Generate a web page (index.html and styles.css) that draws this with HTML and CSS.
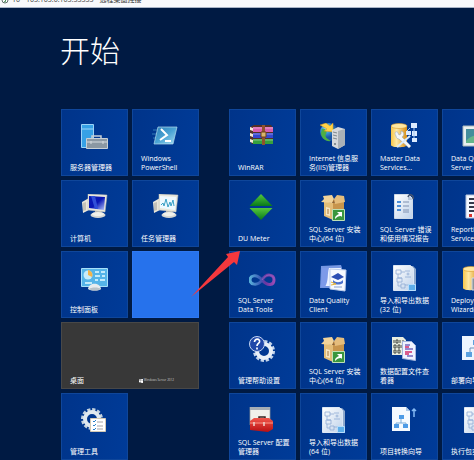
FILE: index.html
```html
<!DOCTYPE html>
<html lang="zh-CN">
<head>
<meta charset="utf-8">
<title>开始</title>
<meta name="viewport" content="width=device-width, initial-scale=1">
<link rel="stylesheet" href="styles.css">
</head>
<body>
<svg class="defs" aria-hidden="true">
  <defs>
    <linearGradient id="paper" x2="1" y2="1"><stop stop-color="#fff"/><stop offset="1" stop-color="#bfd2ea"/></linearGradient>
    <linearGradient id="gold"><stop stop-color="#f7c64a"/><stop offset=".35" stop-color="#ffe9a5"/><stop offset="1" stop-color="#d68b12"/></linearGradient>
    <linearGradient id="screen" x2="1" y2="1"><stop stop-color="#0a1eb4"/><stop offset=".5" stop-color="#0815b4"/><stop offset="1" stop-color="#b5c8ff"/></linearGradient>
    <linearGradient id="shell" x2="1" y2="1"><stop stop-color="#2d7fb8"/><stop offset=".5" stop-color="#4aa3d4"/><stop offset="1" stop-color="#a5dcf0"/></linearGradient>
    <linearGradient id="green" x2="0" y2="1"><stop stop-color="#54c83c"/><stop offset="1" stop-color="#087a1a"/></linearGradient>
    <linearGradient id="loop"><stop stop-color="#58aed8"/><stop offset=".4" stop-color="#3c5fb8"/><stop offset=".65" stop-color="#6b35a0"/><stop offset="1" stop-color="#9a4bb5"/></linearGradient>
    <linearGradient id="red" x2="0" y2="1"><stop stop-color="#f0564a"/><stop offset="1" stop-color="#b80f12"/></linearGradient>
    <radialGradient id="globe" cx=".35" cy=".3"><stop stop-color="#b8ecff"/><stop offset=".5" stop-color="#3c9bdc"/><stop offset="1" stop-color="#1a58a8"/></radialGradient>
    <symbol id="box" viewBox="0 0 27 27">
      <path d="M4 7l9 2v17l-9-4z" fill="#e3bd78"/><path d="M13 9l11-2v15l-11 4z" fill="#c8954c"/>
      <path d="M4 7l6-3 4 2-1 3z" fill="#8a5a24"/><path d="M13 6l6-3 5 4-11 2z" fill="#9c6a30"/>
      <path d="M4 5L3 2l9-1 2 4-2 4-11-1z" fill="#f1d39a"/><path d="M14 5l3-4 7 1 1 6-10 2z" fill="#e5bd7c"/>
      <path d="M6 13l4 1v8l-4-1z" fill="#f6e5c2"/><path d="M8 15v5" stroke="#a6783c"/>
      <path d="M12.500 15.500h12v11h-12z" fill="#3a963e" stroke="#bfe0b6"/><path d="M15 24c0-2 2-3 4-4l-2-2h5v5l-1-1c-3 0-4 1-6 3z" fill="#fff"/>
    </symbol>
    <symbol id="flow" viewBox="0 0 27 27">
      <path d="M5 1h17l3 3v22H5z" fill="#8fa9cc"/><path d="M2.500.5h17l3 3v22h-20z" fill="url(#paper)" stroke="#dce7f5"/>
      <g fill="none" stroke="#8fabd4" stroke-width=".8"><path d="M5 5h5v4H5zM14 6h5M10 7h4M7 9v4h4M6 13h5v4H6zM14 12h6M7 17v4h3M10 19h4v4h-4zM14 20h4"/><circle cx="17" cy="9" r="1"/></g>
      <path d="M17.500 19.500h7v6h-7z" fill="#5eaeea" stroke="#b7dcfa"/>
    </symbol>
    <symbol id="cylinder" viewBox="0 0 27 27">
      <path d="M1 4v19c0 3 16 3 16 0V4z" fill="url(#gold)"/><ellipse cx="9" cy="4" rx="8" ry="2.500" fill="#ffe7a0" stroke="#d99b2c" stroke-width=".6"/>
    </symbol>
    <symbol id="pc" viewBox="0 0 27 27">
      <path d="M1 8l7-4v12l-6 3z" fill="#e9e6da"/><path d="M2 9l3-1v8l-3 1z" fill="#c3c1b8"/>
      <ellipse cx="17" cy="21" rx="7.500" ry="3" fill="#d6d7d2"/><path d="M14 15h6l1 5h-7z" fill="#b3b6b5"/><ellipse cx="17" cy="20" rx="6" ry="2" fill="#f1f1eb"/>
      <path d="M7 0l19 1-2 17-17-2z" fill="#e9e7dc" stroke="#bfc1b9" stroke-width=".5"/>
    </symbol>
  </defs>
</svg>

<header class="topbar">
  <svg class="topbar-icon" viewBox="0 0 8 8" aria-hidden="true"><circle cx="4" cy="4" r="3" fill="#fff" stroke="#61706a"/><path d="M3 3l2 2-2 1" fill="none" stroke="#49915b"/></svg>
  <span>10</span><span class="host">103.103.0.103:33333</span><span>远程桌面连接</span>
</header>

<main class="start">
  <h1>开始</h1>
  <div class="groups">
    <section class="group group-system" aria-label="系统">
      <a class="tile" href="#"><svg viewBox="0 0 27 27" aria-hidden="true"><path d="M.5 1.500h12v23H.5z" fill="#36a1e6" stroke="#9bd3f7"/><path d="M1 6h11" stroke="#9bd3f7"/><path d="M11 15v-2h9v2" fill="none" stroke="#c8d0d6" stroke-width="1.500"/><path d="M5.500 15.500h21v10h-21z" fill="#8b98a3" stroke="#c8d0d6"/><path d="M6 19h20M10 18v3M22 18v3" stroke="#d6dce0"/></svg><span>服务器管理器</span></a>
      <a class="tile" href="#"><svg viewBox="0 0 27 27" aria-hidden="true"><path d="M1 7h5M0 11h5M1 15h3" stroke="#337db8"/><path d="M6 4h19l-4 17H2z" fill="url(#shell)" stroke="#b5dcee" stroke-width=".7"/><path d="M9 6l6 6-7 5M13 18h6" fill="none" stroke="#fff" stroke-width="2"/></svg><span>Windows<br>PowerShell</span></a>
      <a class="tile" href="#"><svg viewBox="0 0 27 27" aria-hidden="true"><use href="#pc"/><path d="M8 2l16 1-1 13-15-2z" fill="url(#screen)"/><path d="M10 2l4 0 3 13-3 0z" fill="#304fd8"/></svg><span>计算机</span></a>
      <a class="tile" href="#"><svg viewBox="0 0 27 27" aria-hidden="true"><use href="#pc"/><path d="M8 2l16 1-1 13-15-2z" fill="#eff9ff"/><path d="M9 11l2-2 1 3 2-7 2 8 2-5 1 4 2-6 1 6" fill="none" stroke="#3aa0c6"/></svg><span>任务管理器</span></a>
      <a class="tile" href="#"><svg viewBox="0 0 27 27" aria-hidden="true"><path d="M.5 3.500h26v18H.5z" fill="#55b4e8" stroke="#a8dff8"/><circle cx="7" cy="10" r="4.500" fill="#c7ecfb"/><path d="M7 10V5a5 5 0 0 1 4 7z" fill="#f2b44c"/><path d="M14 7h4M20 7h4M14 11h5M21 11h3M14 15h3M19 15h5M4 18h7" stroke="#e8fbff" stroke-width="1.500"/><path d="M7 24c1-7 12-7 13 0-3 2-10 2-13 0z" fill="#e8ecee"/><path d="M8 24c2-2 10-2 12 0-3 2-9 2-12 0z" fill="#b8c2c8"/></svg><span>控制面板</span></a>
      <a class="tile tile-active" href="#" aria-label="磁贴"></a>
      <a class="tile tile-wide" href="#"><span>桌面</span><small><svg class="brand" viewBox="0 0 4 4" aria-hidden="true"><path d="M0 .6L1.800.3v1.500H0zM2 .3L4 0v1.800H2zM0 2h1.800v1.500L0 3.300zM2 2h2v2l-2-.3z" fill="#fff"/></svg>Windows Server 2012</small></a>
      <a class="tile" href="#"><svg viewBox="0 0 27 27" aria-hidden="true"><circle cx="11" cy="12" r="9" fill="none" stroke="#c3d2df" stroke-width="4" stroke-dasharray="3 1.700"/><circle cx="11" cy="12" r="7" fill="none" stroke="#dfe8ef" stroke-width="4"/><path d="M9.500 11.500h15v13h-15z" fill="#fff" stroke="#d3c9b5"/><path d="M12 14l1 1 2-2M12 18l1 1 2-2M12 22l1 1 2-2" fill="none" stroke="#2a80c8"/><path d="M16 15h6M16 19h6M16 22h6" stroke="#a6a3a5"/></svg><span>管理工具</span></a>
    </section>

    <section class="group group-apps" aria-label="应用">
      <a class="tile" href="#"><svg viewBox="0 0 27 27" aria-hidden="true"><path d="M1 4l4-2h17l2 3v16H3l-2-3z" fill="#543125"/><path d="M4 4h20v5H4z" fill="#d85eae"/><path d="M4 10h20v5H4z" fill="#3547cf"/><path d="M4 16h20v5H4z" fill="#37a13c"/><path d="M1 4l3 1v3L1 7zM1 10l3 1v3l-3-1zM1 16l3 1v3l-3-1z" fill="#f3ead7"/><path d="M4 5h20M4 11h20M4 17h20" stroke="#fff" stroke-opacity=".4"/><path d="M13 2h3v20h-3z" fill="#91532d"/><path d="M12 9h5v5h-5z" fill="#d9b56b" stroke="#6c3d1c"/></svg><span>WinRAR</span></a>
      <a class="tile" href="#"><svg viewBox="0 0 27 27" aria-hidden="true"><circle cx="9" cy="9" r="9" fill="url(#globe)"/><path d="M2 6c3-1 6 2 4 5s2 5 5 7c-5 1-10-3-10-8zM12 5l5 2v5l-4-1z" fill="#4caf45"/><path d="M0 2l6-2 4 3 3-3v9L4 8l3-2z" fill="#ffd348" stroke="#cf8f16" stroke-width=".5"/><path d="M12 7l6-3 7 2v16l-7 4-6-3z" fill="#d6d9dc"/><path d="M18 8l7-2v16l-7 4z" fill="#aab1b7"/><path d="M13 9l4 1M13 12l4 1M13 15l4 1" stroke="#7f898f"/><circle cx="15" cy="21" r="1" fill="#6d777d"/></svg><span>Internet 信息服<br>务(IIS)管理器</span></a>
      <a class="tile" href="#"><svg viewBox="0 0 27 27" aria-hidden="true"><g transform="translate(-1 -1)"><use href="#cylinder" width="27" height="27"/></g><path d="M20 0h6v5h-6zM15 8h5v4h-5zM21 8h5v5h-5zM21 15h5v4h-5z" fill="#dcebff"/><path d="M19 5l-3 3M23 5v10" stroke="#a4c7ef"/><path d="M5 13c-3-5 2-5 2-3l1 2 2-1V8c4 1 3 5 1 6l9 9-2 2-10-9c-1 0-3-1-3-3z" fill="#f4f7fa" stroke="#98a7b8" stroke-width=".6"/><path d="M19 13L6 24" stroke="#d9eafa" stroke-width="2"/></svg><span>Master Data<br>Services...</span></a>
      <a class="tile" href="#"><svg viewBox="0 0 27 27" aria-hidden="true"><path d="M1 3h26v20H1z" fill="#e8efef" stroke="#aab9bd"/><path d="M4 6h23v14H4z" fill="#438d9c"/><path d="M4 18c6-7 12-5 23-9v11H4z" fill="#65b58b"/></svg><span>Data Quality<br>Server Installer</span></a>

      <a class="tile" href="#"><svg viewBox="0 0 27 27" aria-hidden="true"><path d="M12 0l11.500 12h-23z" fill="url(#green)"/><path d="M.5 14h23L12 26z" fill="url(#green)"/></svg><span>DU Meter</span></a>
      <a class="tile" href="#"><svg viewBox="0 0 27 27" aria-hidden="true"><use href="#box"/></svg><span>SQL Server 安装<br>中心(64 位)</span></a>
      <a class="tile" href="#"><svg viewBox="0 0 27 27" aria-hidden="true"><path d="M3.500.5h14l4 4v20h-18z" fill="url(#paper)" stroke="#ced9e7"/><path d="M17 1v5h5" fill="#b7c5d8"/><path d="M17 3c1-4 6-2 5 2" fill="none" stroke="#46546d" stroke-width="1.500"/><path d="M6 8h4M6 12h4M6 16h4" stroke="#4d8ed7" stroke-width="2"/><path d="M12 8h6M12 12h6M12 16h6M12 18h6" stroke="#7f90b0"/></svg><span>SQL Server 错误<br>和使用情况报告</span></a>
      <a class="tile" href="#"><svg viewBox="0 0 27 27" aria-hidden="true"><path d="M4 1h20v23H4z" fill="#f5f8ff" stroke="#b8c5dc"/><path d="M7 5h14M7 9h14M7 13h14M7 17h14" stroke="#34394c" stroke-width="2"/><path d="M7 20h3v3H7z" fill="#d7332c"/></svg><span>Reporting<br>Services 配置</span></a>

      <a class="tile" href="#"><svg viewBox="0 0 27 27" aria-hidden="true"><path d="M13 15C8 22 1 19 1 15s6-7 12 0 12 5 12 0-7-8-12 0" fill="none" stroke="url(#loop)" stroke-width="3"/><path d="M13 15c5-8 12-5 12 0" fill="none" stroke="#8b62bd"/></svg><span>SQL Server<br>Data Tools</span></a>
      <a class="tile" href="#"><svg viewBox="0 0 27 27" aria-hidden="true"><path d="M1 1l20-1 1 3v20H0z" fill="#7697e2"/><path d="M2 3h19v18H2z" fill="#edf3ff"/><path d="M2 3h7c-2 6 0 12-4 19H1z" fill="#7d9ae9"/><path d="M10 4l16 1-1 21-15-2z" fill="#f7faff" stroke="#bdcdec"/><path d="M11 12l7-4 6 4-6 3z" fill="#2d4fb4"/><path d="M13 15c3 3 7 3 10 0v3c-3 2-7 2-10 0z" fill="#4c71cc"/><path d="M11 17l5 2-5 1" stroke="#e7b335" fill="none"/><path d="M14 22h8" stroke="#8ca2d0"/></svg><span>Data Quality<br>Client</span></a>
      <a class="tile" href="#"><svg viewBox="0 0 27 27" aria-hidden="true"><use href="#flow"/></svg><span>导入和导出数据<br>(32 位)</span></a>
      <a class="tile" href="#"><svg viewBox="0 0 27 27" aria-hidden="true"><use href="#cylinder"/><path d="M10 13h15v12H10z" fill="#8b949d" stroke="#d4dbe1"/></svg><span>Deployment<br>Wizard(64 位)</span></a>

      <a class="tile" href="#"><svg viewBox="0 0 27 27" aria-hidden="true"><circle cx="15" cy="15" r="9" fill="none" stroke="#c4d5ec" stroke-width="4" stroke-dasharray="3 1.700"/><circle cx="15" cy="15" r="7" fill="none" stroke="#e9f0f8" stroke-width="4"/><circle cx="8" cy="8" r="7.500" fill="#2148a9" stroke="#c5d6f2"/><path d="M5.500 6c0-4 6-3.500 5 0-.5 1.500-2.500 1.500-2.500 4M8 11.500v2" fill="none" stroke="#fff" stroke-width="1.700"/></svg><span>管理帮助设置</span></a>
      <a class="tile" href="#"><svg viewBox="0 0 27 27" aria-hidden="true"><use href="#box"/></svg><span>SQL Server 安装<br>中心(64 位)</span></a>
      <a class="tile" href="#"><svg viewBox="0 0 27 27" aria-hidden="true"><path d="M1 1h11l3 3v15H1z" fill="#e8eddf"/><g fill="none" stroke="#404743"><path d="M3 4v3M12 4v3M9 4v3"/><path d="M5 4h2v3H5zM3 9h2v3H3zM7 9h2v3H7zM11 9h2v3h-2zM3 14h2v3H3zM7 14h2v3H7z"/></g><path d="M11.500 5.500h9l4 4v15l-13-2z" fill="#eff3ff" stroke="#a4b7dd"/><path d="M14 9h5M14 13h8M16 20h6" stroke="#7469be" stroke-width="1.500"/><path d="M14 11h4M14 16h7M14 18h4" stroke="#d32c68" stroke-width="1.500"/></svg><span>数据配置文件查<br>看器</span></a>
      <a class="tile" href="#"><svg viewBox="0 0 27 27" aria-hidden="true"><path d="M0 0h27v24H0z" fill="#edf5ff"/><path d="M8 16v-4h11v4M14 12V8" fill="none" stroke="#6f91bb"/><path d="M11 4h6v5h-6zM4 16h6v5H4zM16 16h6v5h-6z" fill="#5aa0df"/></svg><span>部署向导</span></a>

      <a class="tile" href="#"><svg viewBox="0 0 27 27" aria-hidden="true"><path d="M1 0h20v18H1z" fill="#f1f0ea" stroke="#9a9b98" stroke-width=".7"/><path d="M1 0h20v3H1z" fill="#a5adb5"/><path d="M10 12v-2h6v2" fill="none" stroke="#34201f" stroke-width="1.500"/><path d="M1 14l4-3h15l4 3v8l-5 3-18-2z" fill="url(#red)"/><path d="M1 16h23" stroke="#ff9685"/><path d="M5 15v4M15 15v4" stroke="#ead6ce" stroke-width="1.500"/></svg><span>SQL Server 配置<br>管理器</span></a>
      <a class="tile" href="#"><svg viewBox="0 0 27 27" aria-hidden="true"><use href="#flow"/></svg><span>导入和导出数据<br>(64 位)</span></a>
      <a class="tile" href="#"><svg viewBox="0 0 27 27" aria-hidden="true"><path d="M1 0h14l4 4v20H1z" fill="#f5faff"/><path d="M15 0v4h4" fill="#aac9ea"/><path d="M5 19v-3h10v3M10 16v-4" fill="none" stroke="#79aad7"/><path d="M8 8h5v4H8zM3 17h5v4H3zM12 17h5v4h-5z" fill="#4d9be6"/><path d="M23 10V2M21 4l2-2 2 2" fill="none" stroke="#84b9f3" stroke-width="1.500"/></svg><span>项目转换向导</span></a>
      <a class="tile" href="#"><svg viewBox="0 0 27 27" aria-hidden="true"><use href="#flow"/></svg><span>执行包实用工具</span></a>
    </section>
  </div>
  <svg class="arrow" viewBox="0 0 50 47" aria-hidden="true"><path d="M0 46L37 6l-2-3L49 0l-3 14-3-3z" fill="#f5383d"/></svg>
</main>
</body>
</html>
```
FILE: styles.css
```css
* { box-sizing: border-box; }

body {
  margin: 0;
  min-height: 100vh;
  overflow: hidden;
  background: #001a43;
  color: #fff;
  font-family: "Open Sans", "Noto Sans CJK SC", sans-serif;
}

.defs { position: absolute; width: 0; height: 0; }

.topbar {
  display: flex;
  align-items: flex-end;
  gap: 3px;
  height: 8px;
  padding: 0 1px 3px;
  overflow: hidden;
  background: #f8f9fc;
  border-bottom: 1px solid #a9b4c7;
  color: #333;
  font-size: 7px;
  line-height: 8px;
  white-space: nowrap;
}

.topbar-icon { flex: none; width: 8px; height: 8px; }
.host { margin: 0 3px; }

.start { position: relative; padding: 20px 0 0 61px; }

h1 {
  margin: 0 0 36px -1px;
  font-size: 30px;
  font-weight: 200;
  line-height: 45px;
}

.groups { display: flex; gap: 30px; }

.group {
  display: grid;
  flex: none;
  grid-auto-rows: 67px;
  gap: 4px;
  align-content: start;
}

.group-system { grid-template-columns: repeat(2, 67px); }

.group-apps {
  flex: 1;
  grid-template-columns: repeat(4, 67px);
  min-width: 0;
  overflow: hidden;
}

.tile {
  display: flex;
  flex-direction: column;
  justify-content: space-between;
  min-width: 0;
  padding: 13px 0 3px 8px;
  border: 1px solid #0f469a;
  background: linear-gradient(100deg, #00348a, #003b98);
  color: #fff;
  font-size: 7px;
  line-height: 9px;
  text-decoration: none;
  white-space: nowrap;
}

.tile > svg { flex: none; width: 27px; height: 27px; margin-left: 11px; }
.tile > span { margin-top: auto; }

.tile-active { border-color: #2e78f2; background: #2672ec; }

.tile-wide {
  grid-column: span 2;
  flex-direction: row;
  align-items: flex-end;
  border-color: #484848;
  background: #383838;
}

.tile-wide small {
  display: flex;
  flex: none;
  align-items: center;
  gap: 1px;
  margin-right: 24px;
  color: #ccc;
  font-size: 3px;
  line-height: 9px;
}

.brand { width: 4px; height: 4px; }

.arrow {
  position: absolute;
  top: 243px;
  left: 191px;
  width: 50px;
  height: 47px;
}
```
